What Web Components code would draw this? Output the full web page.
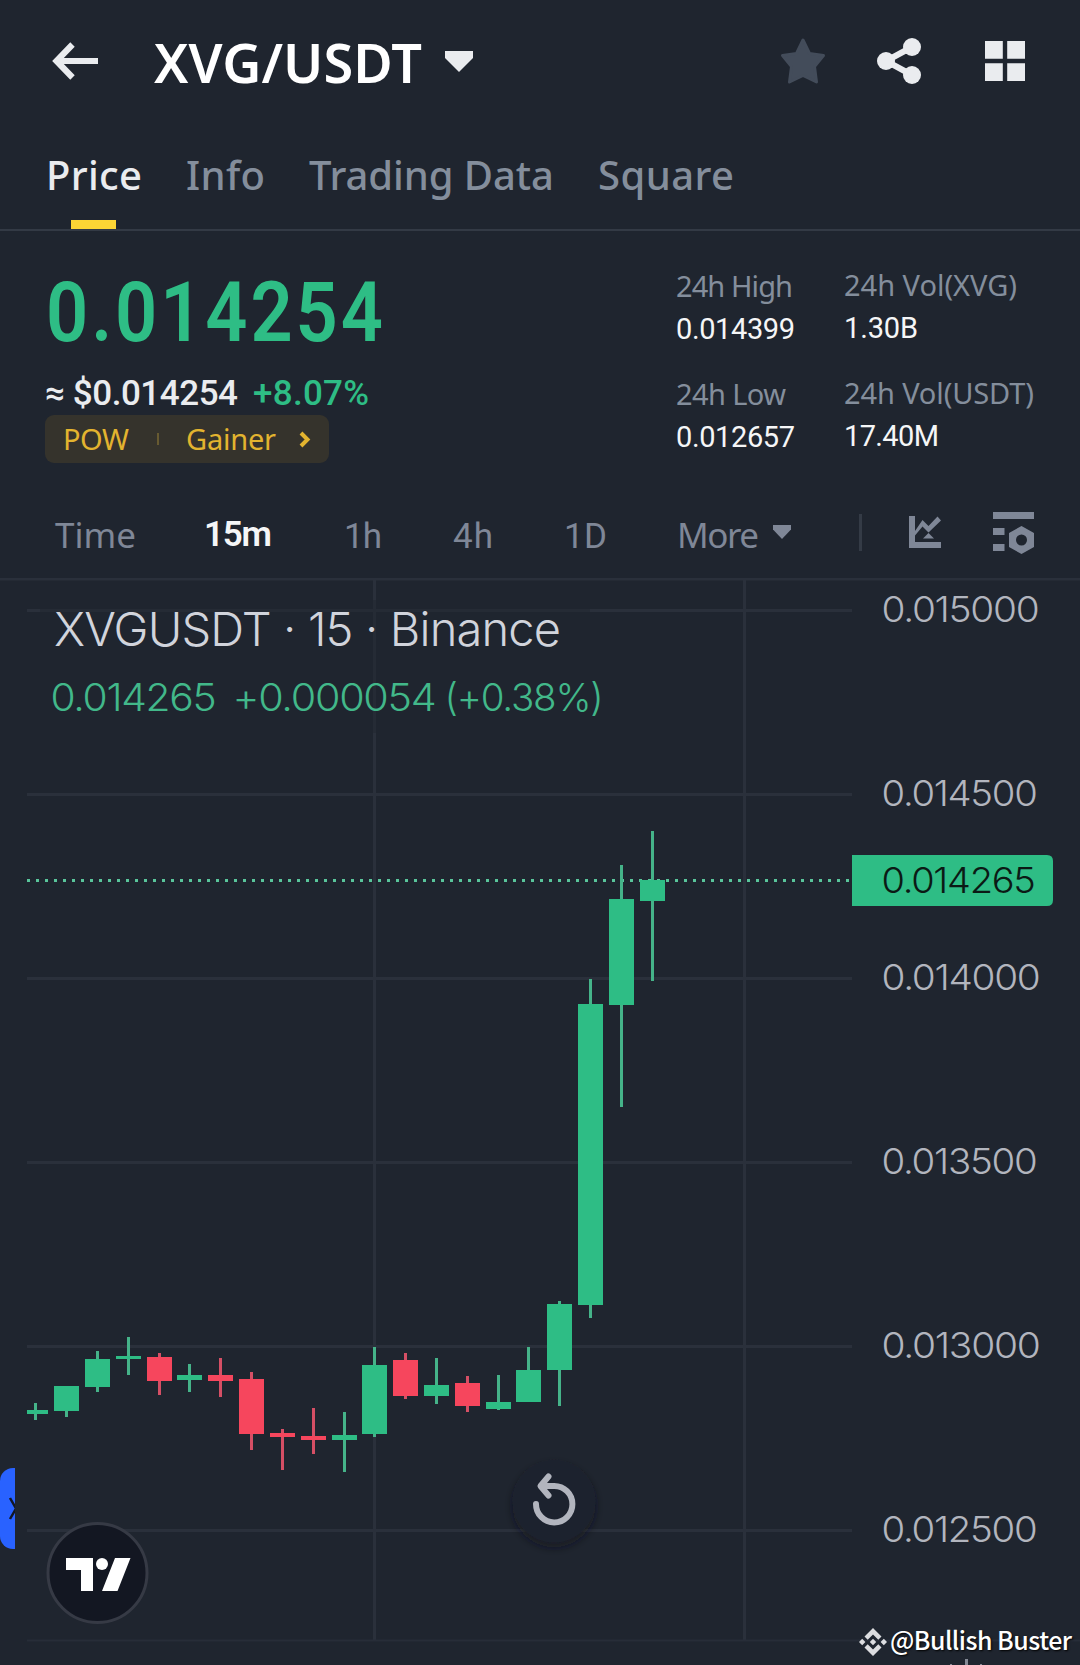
<!DOCTYPE html>
<html lang="en">
<head>
<meta charset="utf-8">
<title>XVG/USDT</title>
<style>
    body {
        margin: 0;
        width: 1080px;
        height: 1665px;
        overflow: hidden;
        background: #1f252f;
        color: #eaecef;
        font-family: 'Noto Sans', sans-serif;
    }
</style>
</head>
<body>
<v-page></v-page>

<script>
// A single line of text that spreads its letters over a given width.
customElements.define('v-text', class extends HTMLElement {
    constructor() {
        super();
        const shadowRoot = this.attachShadow({mode: 'open'});
        shadowRoot.innerHTML = `
            <style>
                :host { display: block; white-space: nowrap; flex: none; }
                span { display: inline-block; transform-origin: 0 50%; }
            </style>
            <span><slot></slot></span>`;
        this.span = shadowRoot.querySelector('span');
    }

    connectedCallback() {
        const width = Number(this.getAttribute('w'));
        const stretch = Number(this.getAttribute('stretch') || 1);
        const natural = this.span.getBoundingClientRect().width;
        const gaps = this.textContent.length - 1;
        this.style.width = `${width}px`;
        this.span.style.letterSpacing = `${(width / stretch - natural) / gaps}px`;
        if (stretch !== 1) {
            this.span.style.transform = `scaleX(${stretch})`;
        }
    }
});

const icons = {
    back: [46, 38, '<path d="M20.500 2.500 4.500 19 20.500 35.500M5 19H46" fill="none" stroke="currentColor" stroke-width="6.200"/>'],
    caret: [28, 21, '<path d="M0 0H28V7L14 21 0 7Z" fill="currentColor"/>'],
    smallCaret: [18, 14, '<path d="M0 0H18V4.500L9 14 0 4.500Z" fill="currentColor"/>'],
    star: [46, 48, '<path d="M23 3 29.500 16.500 43.500 18.500 34.500 29.500 36.500 45 23 38.500 9.500 45 11.500 29.500 2.500 18.500 16.500 16.500Z" fill="currentColor" stroke="currentColor" stroke-width="3" stroke-linejoin="round"/>'],
    share: [44, 48, '<path d="M35 10 9 24 35 38" fill="none" stroke="currentColor" stroke-width="6"/><circle cx="35" cy="10" r="9"/><circle cx="9" cy="24" r="9"/><circle cx="35" cy="38" r="9"/>'],
    grid: [40, 40, '<path d="M0 0H17.800V17.800H0ZM22.200 0H40V17.800H22.200ZM0 22.200H17.800V40H0ZM22.200 22.200H40V40H22.200Z"/>'],
    chevron: [12, 17, '<path d="M2 2 8.500 8.500 2 15" fill="none" stroke="currentColor" stroke-width="4"/>'],
    indicator: [32, 32, '<path d="M0 0H6V15L13.500 4 19.500 10 28.500 0.500 32 4.500 19.500 16.500 13.500 10.500 6 19.500V26H32V32H0Z"/><path d="M19.500 17 25 22.500H14Z"/>'],
    settings: [41, 42, '<path d="M0 0H41V7H0ZM0 16H11.500V23H0ZM0 32H11.500V39H0Z"/><path fill-rule="evenodd" d="M28.500 14 41 21V35L28.500 42 16 35V21ZM28.500 22.500A5.500 5.500 0 1 0 28.500 33.500 5.500 5.500 0 1 0 28.500 22.500Z"/>'],
    binance: [28, 28, '<path d="M14 0 22.500 8.500 19.300 11.700 14 6.400 8.700 11.700 5.500 8.500ZM14 28 22.500 19.500 19.300 16.300 14 21.600 8.700 16.300 5.500 19.500ZM14 10.800 17.200 14 14 17.200 10.800 14ZM3.200 10.800 6.400 14 3.200 17.200 0 14ZM24.800 10.800 28 14 24.800 17.200 21.600 14Z"/>'],
};

customElements.define('v-icon', class extends HTMLElement {
    constructor() {
        super();
        this.attachShadow({mode: 'open'});
    }

    connectedCallback() {
        const [width, height, shapes] = icons[this.getAttribute('name')];
        this.shadowRoot.innerHTML = `
            <style>
                :host { display: block; flex: none; width: ${width}px; height: ${height}px; }
                svg { display: block; }
            </style>
            <svg width="${width}" height="${height}" viewBox="0 0 ${width} ${height}" fill="currentColor">${shapes}</svg>`;
    }
});

customElements.define('v-header', class extends HTMLElement {
    constructor() {
        super();
        this.attachShadow({mode: 'open'}).innerHTML = `
            <style>
                :host { display: flex; align-items: center; height: 122px; padding: 0 55px 0 52px; box-sizing: border-box; }
                .title { margin: 0 23px 0 56px; padding-top: 2px; font: 600 54px/70px 'Noto Sans', sans-serif; color: #fff; }
                .actions { display: flex; align-items: center; margin-left: auto; }
                .star { color: #434c5a; margin-right: 51px; }
                .share { margin-right: 64px; }
            </style>
            <v-icon name="back"></v-icon>
            <v-text class="title" w="268">XVG/USDT</v-text>
            <v-icon name="caret"></v-icon>
            <div class="actions">
                <v-icon class="star" name="star"></v-icon>
                <v-icon class="share" name="share"></v-icon>
                <v-icon name="grid"></v-icon>
            </div>`;
    }
});

customElements.define('v-tabs', class extends HTMLElement {
    constructor() {
        super();
        this.attachShadow({mode: 'open'}).innerHTML = `
            <style>
                :host {
                    display: flex; gap: 44px; height: 109px; padding-left: 46px; box-sizing: border-box;
                    border-bottom: 2px solid #333a45; font: 500 40px/105px 'Noto Sans', sans-serif; color: #848e9c;
                }
                .active { position: relative; color: #eaecef; }
                .active::after {
                    content: ''; position: absolute; left: 25px; bottom: 0;
                    width: 45px; height: 9px; background: #fcd535;
                }
            </style>
            <v-text class="active" w="96">Price</v-text>
            <v-text w="79">Info</v-text>
            <v-text w="245">Trading Data</v-text>
            <v-text w="136">Square</v-text>`;
    }
});

customElements.define('v-stat', class extends HTMLElement {
    constructor() {
        super();
        this.attachShadow({mode: 'open'}).innerHTML = `
            <style>
                :host { display: flex; flex-direction: column; gap: 7px; line-height: 36px; }
                .label { font-size: 29px; color: #848e9c; }
                .value { font-family: Roboto, sans-serif; font-size: 29px; color: #f5f6f7; }
            </style>
            <div class="label"><slot name="label"></slot></div>
            <div class="value"><slot></slot></div>`;
    }
});

customElements.define('v-ticker', class extends HTMLElement {
    constructor() {
        super();
        this.attachShadow({mode: 'open'}).innerHTML = `
            <style>
                :host { display: flex; height: 259px; box-sizing: border-box; }
                .main { width: 676px; padding: 42px 0 0 45px; box-sizing: border-box; font-family: Roboto, sans-serif; }
                .price { margin-left: 1px; font-size: 84px; font-weight: 600; line-height: 80px; color: #2ebd85; }
                .fiat { display: flex; gap: 15px; margin-top: 21px; font-size: 35px; font-weight: 500; line-height: 40px; }
                .change { color: #2ebd85; }
                .tags {
                    display: flex; align-items: center; width: 284px; height: 48px; margin-top: 1px; padding: 0 18px 0 18px;
                    box-sizing: border-box; border-radius: 9px; background: #35332c;
                    font: 29px/48px 'Noto Sans', sans-serif; color: #e3b42f;
                }
                .tags i { width: 2px; height: 12px; margin: 0 27px 0 28px; background: #675a31; }
                .tags v-icon { margin-left: auto; }
                .column { display: flex; flex-direction: column; gap: 29px; padding-top: 37px; }
                .low { width: 168px; }
                .volume { padding-top: 36px; }
            </style>
            <div class="main">
                <v-text class="price" w="337" stretch="0.88">0.014254</v-text>
                <div class="fiat">
                    <v-text w="193">≈ $0.014254</v-text>
                    <v-text class="change" w="116">+8.07%</v-text>
                </div>
                <div class="tags">
                    <v-text w="66">POW</v-text><i></i><v-text w="90">Gainer</v-text><v-icon name="chevron"></v-icon>
                </div>
            </div>
            <div class="column low">
                <v-stat><v-text slot="label" w="117">24h High</v-text><v-text w="119">0.014399</v-text></v-stat>
                <v-stat><v-text slot="label" w="110">24h Low</v-text><v-text w="119">0.012657</v-text></v-stat>
            </div>
            <div class="column volume">
                <v-stat><v-text slot="label" w="173">24h Vol(XVG)</v-text><v-text w="74">1.30B</v-text></v-stat>
                <v-stat><v-text slot="label" w="190">24h Vol(USDT)</v-text><v-text w="95">17.40M</v-text></v-stat>
            </div>`;
    }
});

customElements.define('v-intervals', class extends HTMLElement {
    constructor() {
        super();
        this.attachShadow({mode: 'open'}).innerHTML = `
            <style>
                :host {
                    display: grid; align-items: center; height: 88px; padding-left: 55px; box-sizing: border-box;
                    grid-template-columns: 149px 140px 109px 111px 113px 96px 86px 50px 84px 42px;
                    font: 35px/46px 'Noto Sans', sans-serif; color: #7f8797;
                }
                v-text { padding-top: 2px; }
                .num { font-family: Roboto, sans-serif; padding-top: 5px; }
                .active { color: #f5f6f7; font-weight: 600; padding-top: 2px; }
                .caret, .indicator { margin-bottom: 4px; }
                .settings { margin-bottom: 2px; }
                i { width: 3px; height: 37px; margin-bottom: 4px; background: #343b46; }
            </style>
            <v-text w="81">Time</v-text>
            <v-text class="num active" w="68">15m</v-text>
            <v-text class="num" w="38">1h</v-text>
            <v-text class="num" w="40">4h</v-text>
            <v-text class="num" w="43">1D</v-text>
            <v-text w="82">More</v-text>
            <v-icon class="caret" name="smallCaret"></v-icon>
            <i></i>
            <v-icon class="indicator" name="indicator"></v-icon>
            <v-icon class="settings" name="settings"></v-icon>`;
    }
});

// Centre x, body top, body bottom, wick top, wick bottom, falling
const candles = [
    [66.5, 1386, 1411, 1386, 1417],
    [97.5, 1359, 1387, 1351, 1392],
    [128.5, 1356, 1359, 1337, 1375],
    [159.5, 1357, 1381, 1353, 1395, true],
    [189.5, 1375, 1380, 1364, 1392],
    [220.5, 1375, 1381, 1358, 1397, true],
    [251.5, 1379, 1434, 1372, 1450, true],
    [282.5, 1433, 1437, 1429, 1470, true],
    [313.5, 1436, 1440, 1408, 1454, true],
    [344.5, 1435, 1440, 1412, 1472],
    [374.5, 1365, 1434, 1347, 1437],
    [405.5, 1360, 1396, 1353, 1399, true],
    [436.5, 1385, 1396, 1358, 1404],
    [467.5, 1383, 1406, 1376, 1412, true],
    [498.5, 1402, 1409, 1375, 1410],
    [528.5, 1370, 1402, 1347, 1402],
    [559.5, 1304, 1370, 1301, 1406],
    [590.5, 1004, 1305, 979, 1318],
    [621.5, 899, 1005, 865, 1107],
    [652.5, 880, 901, 831, 981],
];

// Price, y of its grid line, width of its text
const prices = [
    ['0.015000', 610, 157],
    ['0.014500', 794, 155],
    ['0.014000', 978, 158],
    ['0.013500', 1162, 155],
    ['0.013000', 1346, 158],
    ['0.012500', 1530, 155],
];

customElements.define('v-chart', class extends HTMLElement {
    constructor() {
        super();
        const gridLines = prices.map(([, y]) => `<path d="M27 ${y + 0.5}H852"/>`).join('');
        const labels = prices.map(([price, y, width]) => {
            return `<text class="wide" x="881.500" y="${y + 12}" textLength="${width}" lengthAdjust="spacingAndGlyphs">${price}</text>`;
        }).join('');
        const bars = candles.map(([x, top, bottom, high, low, falling]) => {
            const color = falling ? '#f6465d' : '#2ebd85';
            const wick = falling ? '#d54f65' : '#45b389';
            return `<path d="M${x} ${high}V${low}" stroke="${wick}" stroke-width="3"/>
                <rect x="${x - 12.5}" y="${top}" width="25" height="${bottom - top}" fill="${color}"/>`;
        }).join('');

        this.attachShadow({mode: 'open'}).innerHTML = `
            <style>
                :host { display: block; position: relative; height: 1087px; }
                svg { display: block; }
                text { font-family: Inter, 'Liberation Sans', sans-serif; font-weight: 300; white-space: pre; }
                .wide { letter-spacing: -1.2px; }
                .watermark {
                    position: absolute; left: 859px; top: 1044px; display: flex; align-items: center; gap: 3px;
                    font: 500 25px/34px 'Noto Sans CJK SC', sans-serif; color: #fff;
                    text-shadow: 1px 1px 2px #000;
                }
                .watermark v-icon { color: #dcdde0; margin-top: 5px; }
            </style>
            <svg width="1080" height="1087" viewBox="0 578 1080 1087">
                <defs>
                    <filter id="shadow" x="-30%" y="-30%" width="160%" height="170%">
                        <feDropShadow dx="0" dy="5" stdDeviation="4" flood-color="#10141c" flood-opacity="0.600"/>
                    </filter>
                    <clipPath id="tab"><path d="M0 1468H15V1549H0Z"/></clipPath>
                </defs>
                <g fill="none" stroke="#2a303b" stroke-width="3">
                    <path d="M0 579H1080M374.500 579V1640M744.500 579V1640"/>
                    ${gridLines}
                    <path d="M27 1640.500H1080" stroke="#272d38" stroke-width="2"/>
                </g>
                <path d="M27 880.500H852" stroke="#59c59b" stroke-width="3" stroke-dasharray="3 6"/>
                <path d="M35.500 1403V1420" stroke="#45b389" stroke-width="3"/>
                <path d="M27 1412H48" stroke="#2ebd85" stroke-width="4"/>
                ${bars}
                <g font-size="36" fill="#b2b5be">${labels}</g>
                <path d="M852 855H1047Q1053 855 1053 861V900Q1053 906 1047 906H852Z" fill="#2ebd85"/>
                <text class="wide" x="881.500" y="893" font-size="36" textLength="153" lengthAdjust="spacingAndGlyphs" fill="#0b1a15">0.014265</text>
                <path d="M40 600H590V733H40Z" fill="#1f252f" opacity="0.500"/>
                <g font-size="47" fill="#d1d4dc">
                    <text x="54" y="646" textLength="507">XVGUSDT · 15 · Binance</text>
                </g>
                <g font-size="38.500" fill="#42b88a">
                    <text class="wide" x="50.500" y="711" textLength="165" lengthAdjust="spacingAndGlyphs">0.014265</text>
                    <text class="wide" x="232.500" y="711" textLength="203" lengthAdjust="spacingAndGlyphs">+0.000054</text>
                    <text class="wide" x="444.500" y="711" textLength="158" lengthAdjust="spacingAndGlyphs">(+0.38%)</text>
                </g>
                <g clip-path="url(#tab)">
                    <rect x="0" y="1468" width="40" height="81" rx="13" fill="#2962ff"/>
                    <path d="M10 1498 16 1508.500 10 1519" fill="none" stroke="#131722" stroke-width="2.500"/>
                </g>
                <circle cx="97.500" cy="1573" r="49.500" fill="#131722" stroke="#363a45" stroke-width="3"/>
                <path d="M66 1558H93V1591H81V1570H66ZM115 1558H130.500L117.500 1591H102Z" fill="#fff"/>
                <circle cx="102" cy="1564" r="6" fill="#fff"/>
                <circle cx="554" cy="1501" r="41.500" fill="#1f232e" filter="url(#shadow)"/>
                <path d="M536 1504A18.200 18.200 0 1 0 554 1486H541M548.500 1476.500 540.500 1486 548.500 1495.500" fill="none" stroke="#b2b5be" stroke-width="6" stroke-linecap="round" stroke-linejoin="round"/>
                <path d="M965 1659H968V1665H965ZM950 1664H952V1665H950ZM980 1664H982V1665H980Z" fill="#858a96"/>
            </svg>
            <div class="watermark">
                <v-icon name="binance"></v-icon>
                <v-text w="182">@Bullish Buster</v-text>
            </div>`;
    }
});

customElements.define('v-page', class extends HTMLElement {
    constructor() {
        super();
        this.attachShadow({mode: 'open'}).innerHTML = `
            <style>:host { display: flex; flex-direction: column; }</style>
            <v-header></v-header>
            <v-tabs></v-tabs>
            <v-ticker></v-ticker>
            <v-intervals></v-intervals>
            <v-chart></v-chart>`;
    }
});
</script>
</body>
</html>
